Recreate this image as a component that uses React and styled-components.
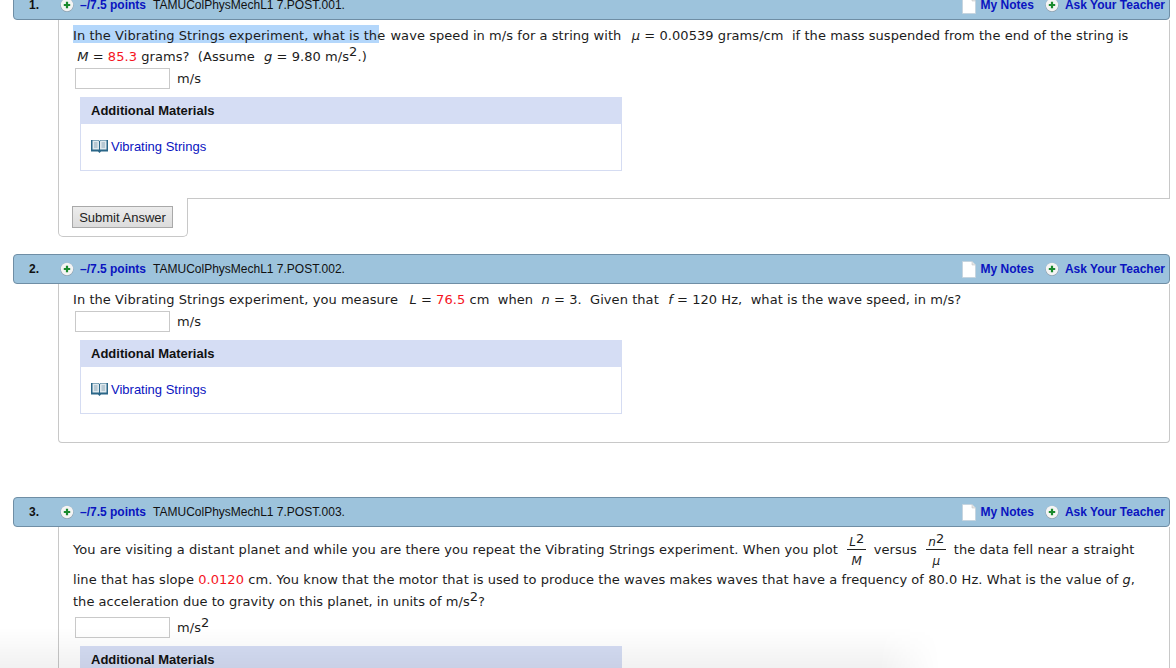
import React from 'react';
import styled, { createGlobalStyle } from 'styled-components';

const GlobalStyle = createGlobalStyle`
  html, body {
    margin: 0;
    padding: 0;
    height: 668px;
    overflow: hidden;
    background: #ffffff;
  }
`;

const Page = styled.div`
  position: relative;
  height: 668px;
  overflow: hidden;
`;
const Questions = styled.div`
  display: flex;
  flex-direction: column;
  width: 1157px;
  margin: -10px 0 0 13px;
`;
const Question = styled.section`
  display: flex;
  flex-direction: column;
  margin-bottom: ${(props) => props.$gap}px;
`;
const Header = styled.div`
  display: flex;
  align-items: center;
  box-sizing: border-box;
  height: 30px;
  padding: 0 4px 0 15px;
  background: #9dc3dc;
  border: 1px solid #6f8ea5;
  border-radius: 4px;
  font: 12px 'Liberation Sans', Arial, sans-serif;
  color: #111111;
`;
const Number = styled.span`
  width: 31px;
  font-weight: bold;
`;
const PlusWrap = styled.span`
  display: inline-flex;
  width: 14px;
  height: 14px;
  flex: none;
`;
const Points = styled.span`
  margin-left: 6px;
  font-weight: bold;
  color: #0a14c0;
`;
const Code = styled.span`
  margin-left: 7px;
`;
const Tools = styled.div`
  display: flex;
  align-items: center;
  margin-left: auto;
`;
const ToolLink = styled.span`
  margin-left: ${(props) => props.$left}px;
  font-weight: bold;
  color: #0a14c0;
`;
const ToolIcon = styled.span`
  display: inline-flex;
  margin-left: ${(props) => props.$left || 0}px;
`;
const Body = styled.div`
  box-sizing: border-box;
  height: ${(props) => props.$height}px;
  margin-left: 45px;
  padding: ${(props) => props.$top}px 0 0 14px;
  background: #ffffff;
  border: 1px solid #c8c8c8;
  border-top: 0;
  border-radius: ${(props) => (props.$flat ? '0' : '0 0 4px 4px')};
  font: 13px/21px 'DejaVu Sans', Verdana, sans-serif;
  letter-spacing: 0.06px;
  color: #1c1c1c;
`;
const Line = styled.div`
  height: ${(props) => props.$height || 21}px;
  line-height: ${(props) => props.$height || 21}px;
  letter-spacing: ${(props) => (props.$tight ? '0.02px' : 'inherit')};
  white-space: pre;
`;
const Selected = styled.span`
  padding: 3px 0 0;
  margin-right: 1px;
  background: linear-gradient(#b4d7fb, #b4d7fb) no-repeat 0 0 / 306px 100%;
`;
const Param = styled.span`
  color: #f5141e;
`;
const Var = styled.i`
  margin-left: ${(props) => props.$left || 0}px;
  font-style: oblique;
`;
const Sup = styled.sup`
  font-size: 13px;
  line-height: 0;
  vertical-align: 5px;
`;
const Fraction = styled.span`
  display: inline-flex;
  flex-direction: column;
  align-items: center;
  vertical-align: middle;
  margin: -2px -1px -4px 1px;
  font-size: 12px;
  line-height: 14px;
  ${Sup} {
    vertical-align: 3px;
  }
`;
const Over = styled.span`
  padding: 0 2px;
  border-bottom: 1px solid #222222;
  line-height: 13px;
`;
const Under = styled.span`
  padding-top: 4px;
`;
const Answer = styled.div`
  display: flex;
  align-items: center;
  margin: ${(props) => props.$top}px 0 0 2px;
`;
const Input = styled.input`
  box-sizing: border-box;
  width: 95px;
  height: 21px;
  padding: 0;
  background: #ffffff;
  border: 1px solid #c9c9c9;
`;
const Unit = styled.span`
  margin-left: 7px;
`;
const Materials = styled.div`
  box-sizing: border-box;
  width: 542px;
  height: 74px;
  margin: 8px 0 0 7px;
  border: 1px solid #d5dcf2;
  font-family: 'Liberation Sans', Arial, sans-serif;
  letter-spacing: 0;
`;
const MaterialsTitle = styled.div`
  height: 27px;
  margin: -1px -1px 0;
  padding-left: 11px;
  background: #d5ddf4;
  font-size: 13px;
  line-height: 27px;
  font-weight: bold;
  color: #111111;
`;
const MaterialLink = styled.div`
  display: flex;
  align-items: center;
  height: 45px;
  padding-left: 10px;
  font-size: 13px;
  color: #0a14c0;
`;
const LinkText = styled.span`
  margin-left: 3px;
`;
const SubmitTab = styled.div`
  box-sizing: border-box;
  width: 130px;
  height: 39px;
  margin: -1px 0 0 45px;
  padding: 8px 0 0 13px;
  background: #ffffff;
  border: 1px solid #c8c8c8;
  border-top: 0;
  border-radius: 0 0 5px 5px;
`;
const Submit = styled.button`
  box-sizing: border-box;
  display: block;
  width: 101px;
  height: 22px;
  padding: 0;
  background: linear-gradient(#ececec, #dcdcdc);
  border: 1px solid #a9a9a9;
  font: 13px 'Liberation Sans', Arial, sans-serif;
  color: #222222;
`;
const BottomShade = styled.div`
  position: absolute;
  left: 0;
  bottom: 0;
  width: 940px;
  height: 40px;
  pointer-events: none;
  background: linear-gradient(rgba(0, 0, 0, 0), rgba(0, 0, 0, 0.055));
  -webkit-mask-image: linear-gradient(to right, #000 880px, transparent 940px);
  mask-image: linear-gradient(to right, #000 880px, transparent 940px);
`;

const PlusIcon = () => (
  <PlusWrap>
    <svg width="14" height="14" viewBox="0 0 14 14">
      <circle cx="7" cy="7.3" r="6.5" fill="#8a9aa6" />
      <circle cx="7" cy="7" r="6.2" fill="#f4f4f4" />
      <path d="M7 3.8v6.4M3.8 7h6.4" stroke="#1b8a2e" strokeWidth="2.2" />
    </svg>
  </PlusWrap>
);

const NoteIcon = () => (
  <svg width="14" height="17" viewBox="0 0 14 17">
    <path d="M.5.5H10L13.5 4V16.5H.5Z" fill="#ffffff" stroke="#c4d2dc" strokeWidth="0.8" />
    <path d="M10 .5V4h3.5" fill="#e4e4e4" stroke="#c8c8c8" strokeWidth="0.6" />
  </svg>
);

const BookIcon = () => (
  <svg width="17" height="15" viewBox="0 0 17 15">
    <path d="M0 1H7.5L8.5 2 9.5 1H17V12.5H10L8.5 14 7 12.5H0Z" fill="#2a6688" />
    <path d="M1.5 1.5H7.5L8 2.5V10.5H1.5ZM9 2.5L9.5 1.5H15.5V10.5H9Z" fill="#dfe9ee" />
    <path d="M3 4H6.5M3 6H6.5M3 8H6.5M10.5 4H14M10.5 6H14M10.5 8H14" stroke="#8fa9b9" />
  </svg>
);

const QuestionHeader = ({ number, code }) => (
  <Header>
    <Number>{number}.</Number>
    <PlusIcon />
    <Points>–/7.5 points</Points>
    <Code>TAMUColPhysMechL1 7.POST.{code}.</Code>
    <Tools>
      <ToolIcon><NoteIcon /></ToolIcon>
      <ToolLink $left={5}>My Notes</ToolLink>
      <ToolIcon $left={11}><PlusIcon /></ToolIcon>
      <ToolLink $left={6}>Ask Your Teacher</ToolLink>
    </Tools>
  </Header>
);

const AdditionalMaterials = () => (
  <Materials>
    <MaterialsTitle>Additional Materials</MaterialsTitle>
    <MaterialLink>
      <BookIcon />
      <LinkText>Vibrating Strings</LinkText>
    </MaterialLink>
  </Materials>
);

const App = () => (
  <Page>
    <GlobalStyle />
    <Questions>
      <Question $gap={17}>
        <QuestionHeader number={1} code="001" />
        <Body $height={179} $top={5} $flat>
          <Line>
            <Selected>In the Vibrating Strings experiment, what is the</Selected>
            {' wave speed in m/s for a string with  '}
            <Var $left={2}>μ</Var>
            {' = 0.00539 grams/cm  if the mass suspended from the end of the string is'}
          </Line>
          <Line>
            {' '}
            <Var>M</Var>
            {' = '}
            <Param>85.3</Param>
            {' grams?  (Assume  '}
            <Var $left={1}>g</Var>
            {' = 9.80 m/s'}
            <Sup>2</Sup>
            {'.)'}
          </Line>
          <Answer $top={1}>
            <Input />
            <Unit>m/s</Unit>
          </Answer>
          <AdditionalMaterials />
        </Body>
        <SubmitTab>
          <Submit>Submit Answer</Submit>
        </SubmitTab>
      </Question>

      <Question $gap={54}>
        <QuestionHeader number={2} code="002" />
        <Body $height={159} $top={5}>
          <Line>
            {'In the Vibrating Strings experiment, you measure  '}
            <Var $left={3}>L</Var>
            {' = '}
            <Param>76.5</Param>
            {' cm  when  '}
            <Var>n</Var>
            {' = 3.  Given that  '}
            <Var $left={1}>f</Var>
            {' = 120 Hz,  what is the wave speed, in m/s?'}
          </Line>
          <Answer $top={1}>
            <Input />
            <Unit>m/s</Unit>
          </Answer>
          <AdditionalMaterials />
        </Body>
      </Question>

      <Question $gap={0}>
        <QuestionHeader number={3} code="003" />
        <Body $height={200} $top={8}>
          <Line $height={30}>
            {'You are visiting a distant planet and while you are there you repeat the Vibrating Strings experiment. When you plot  '}
            <Fraction>
              <Over><Var>L</Var><Sup>2</Sup></Over>
              <Under><Var>M</Var></Under>
            </Fraction>
            {'  versus  '}
            <Fraction>
              <Over><Var>n</Var><Sup>2</Sup></Over>
              <Under><Var>μ</Var></Under>
            </Fraction>
            {'  the data fell near a straight'}
          </Line>
          <Line $height={30}>
            {'line that has slope '}
            <Param>0.0120</Param>
            {' cm. You know that the motor that is used to produce the waves makes waves that have a frequency of 80.0 Hz. What is the value of '}
            <Var>g</Var>
            {','}
          </Line>
          <Line $height={14} $tight>
            {'the acceleration due to gravity on this planet, in units of m/s'}
            <Sup>2</Sup>
            {'?'}
          </Line>
          <Answer $top={8}>
            <Input />
            <Unit>m/s<Sup>2</Sup></Unit>
          </Answer>
          <AdditionalMaterials />
        </Body>
      </Question>
    </Questions>
    <BottomShade />
  </Page>
);

export default App;
